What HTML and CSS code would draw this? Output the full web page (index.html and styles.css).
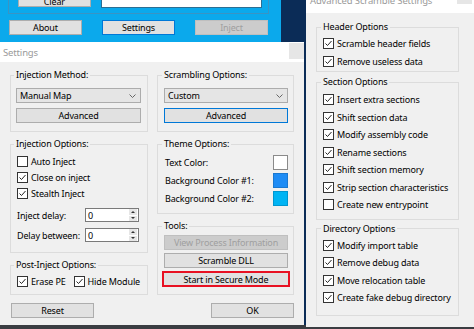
FILE: index.html
```html
<!DOCTYPE html>
<html>
<head>
<meta charset="utf-8">
<link rel="stylesheet" href="styles.css">
</head>
<body>
<div class="desk">
  <div class="backdrop"></div>

  <div class="win main-win">
    <div class="frame">
      <div class="btn clear-btn">Clear</div>
      <div class="textbox"></div>
    </div>
    <div class="main-row">
      <div class="btn">About</div>
      <div class="btn focus">Settings</div>
      <div class="btn disabled">Inject</div>
    </div>
  </div>

  <div class="win settings">
    <div class="titlebar"><span class="title">Settings</span><span class="closebox"></span></div>
    <div class="client">
      <div class="cols">
        <div class="col">
          <fieldset class="group g-method">
            <legend>Injection Method:</legend>
            <div class="combo"><span>Manual Map</span><svg class="chev" width="7" height="4" viewBox="0 0 7 4"><polyline points="0.5,0.5 3.5,3.5 6.5,0.5" fill="none" stroke="#666" stroke-width="1"/></svg></div>
            <div class="btn">Advanced</div>
          </fieldset>
          <fieldset class="group g-inject">
            <legend>Injection Options:</legend>
            <div class="chk"><span class="box"></span><span>Auto Inject</span></div>
            <div class="chk"><span class="box"><svg width="9" height="9" viewBox="0 0 9 9"><polyline points="1.5,4.5 3.5,6.5 7.5,2" fill="none" stroke="#222" stroke-width="1"/></svg></span><span>Close on inject</span></div>
            <div class="chk"><span class="box"><svg width="9" height="9" viewBox="0 0 9 9"><polyline points="1.5,4.5 3.5,6.5 7.5,2" fill="none" stroke="#222" stroke-width="1"/></svg></span><span>Stealth Inject</span></div>
            <div class="spinrow first"><span>Inject delay:</span><div class="spin"><span class="val">0</span><span class="arrows"><span class="up"></span><span class="down"></span></span></div></div>
            <div class="spinrow"><span>Delay between:</span><div class="spin"><span class="val">0</span><span class="arrows"><span class="up"></span><span class="down"></span></span></div></div>
          </fieldset>
          <fieldset class="group g-post">
            <legend>Post-Inject Options:</legend>
            <div class="chk-line">
              <div class="chk"><span class="box"><svg width="9" height="9" viewBox="0 0 9 9"><polyline points="1.5,4.5 3.5,6.5 7.5,2" fill="none" stroke="#222" stroke-width="1"/></svg></span><span>Erase PE</span></div>
              <div class="chk"><span class="box"><svg width="9" height="9" viewBox="0 0 9 9"><polyline points="1.5,4.5 3.5,6.5 7.5,2" fill="none" stroke="#222" stroke-width="1"/></svg></span><span>Hide Module</span></div>
            </div>
          </fieldset>
        </div>
        <div class="col">
          <fieldset class="group g-method">
            <legend>Scrambling Options:</legend>
            <div class="combo"><span>Custom</span><svg class="chev" width="7" height="4" viewBox="0 0 7 4"><polyline points="0.5,0.5 3.5,3.5 6.5,0.5" fill="none" stroke="#666" stroke-width="1"/></svg></div>
            <div class="btn focus">Advanced</div>
          </fieldset>
          <fieldset class="group g-theme">
            <legend>Theme Options:</legend>
            <div class="color-row"><span>Text Color:</span><span class="swatch sw-white"></span></div>
            <div class="color-row"><span>Background Color #1:</span><span class="swatch sw-blue"></span></div>
            <div class="color-row"><span>Background Color #2:</span><span class="swatch sw-cyan"></span></div>
          </fieldset>
          <fieldset class="group g-tools">
            <legend>Tools:</legend>
            <div class="btn disabled">View Process Information</div>
            <div class="btn">Scramble DLL</div>
            <div class="btn secure">Start in Secure Mode</div>
          </fieldset>
        </div>
      </div>
      <div class="bottom-row">
        <div class="btn wide">Reset</div>
        <div class="btn wide">OK</div>
      </div>
    </div>
  </div>

  <div class="win adv">
    <div class="titlebar adv-title"><span class="title">Advanced Scramble Settings</span><span class="closebox"></span></div>
    <div class="client adv-client">
      <fieldset class="group ag ag-header">
        <legend>Header Options</legend>
        <div class="chk"><span class="box"><svg width="9" height="9" viewBox="0 0 9 9"><polyline points="1.5,4.5 3.5,6.5 7.5,2" fill="none" stroke="#222" stroke-width="1"/></svg></span><span>Scramble header fields</span></div>
        <div class="chk"><span class="box"><svg width="9" height="9" viewBox="0 0 9 9"><polyline points="1.5,4.5 3.5,6.5 7.5,2" fill="none" stroke="#222" stroke-width="1"/></svg></span><span>Remove useless data</span></div>
      </fieldset>
      <fieldset class="group ag ag-section">
        <legend>Section Options</legend>
        <div class="chk"><span class="box"><svg width="9" height="9" viewBox="0 0 9 9"><polyline points="1.5,4.5 3.5,6.5 7.5,2" fill="none" stroke="#222" stroke-width="1"/></svg></span><span>Insert extra sections</span></div>
        <div class="chk"><span class="box"><svg width="9" height="9" viewBox="0 0 9 9"><polyline points="1.5,4.5 3.5,6.5 7.5,2" fill="none" stroke="#222" stroke-width="1"/></svg></span><span>Shift section data</span></div>
        <div class="chk"><span class="box"><svg width="9" height="9" viewBox="0 0 9 9"><polyline points="1.5,4.5 3.5,6.5 7.5,2" fill="none" stroke="#222" stroke-width="1"/></svg></span><span>Modify assembly code</span></div>
        <div class="chk"><span class="box"><svg width="9" height="9" viewBox="0 0 9 9"><polyline points="1.5,4.5 3.5,6.5 7.5,2" fill="none" stroke="#222" stroke-width="1"/></svg></span><span>Rename sections</span></div>
        <div class="chk"><span class="box"><svg width="9" height="9" viewBox="0 0 9 9"><polyline points="1.5,4.5 3.5,6.5 7.5,2" fill="none" stroke="#222" stroke-width="1"/></svg></span><span>Shift section memory</span></div>
        <div class="chk"><span class="box"><svg width="9" height="9" viewBox="0 0 9 9"><polyline points="1.5,4.5 3.5,6.5 7.5,2" fill="none" stroke="#222" stroke-width="1"/></svg></span><span>Strip section characteristics</span></div>
        <div class="chk"><span class="box"></span><span>Create new entrypoint</span></div>
      </fieldset>
      <fieldset class="group ag ag-dir">
        <legend>Directory Options</legend>
        <div class="chk"><span class="box"><svg width="9" height="9" viewBox="0 0 9 9"><polyline points="1.5,4.5 3.5,6.5 7.5,2" fill="none" stroke="#222" stroke-width="1"/></svg></span><span>Modify import table</span></div>
        <div class="chk"><span class="box"><svg width="9" height="9" viewBox="0 0 9 9"><polyline points="1.5,4.5 3.5,6.5 7.5,2" fill="none" stroke="#222" stroke-width="1"/></svg></span><span>Remove debug data</span></div>
        <div class="chk"><span class="box"><svg width="9" height="9" viewBox="0 0 9 9"><polyline points="1.5,4.5 3.5,6.5 7.5,2" fill="none" stroke="#222" stroke-width="1"/></svg></span><span>Move relocation table</span></div>
        <div class="chk"><span class="box"><svg width="9" height="9" viewBox="0 0 9 9"><polyline points="1.5,4.5 3.5,6.5 7.5,2" fill="none" stroke="#222" stroke-width="1"/></svg></span><span>Create fake debug directory</span></div>
      </fieldset>
    </div>
  </div>
</div>
</body>
</html>
```

FILE: styles.css
```css
* { box-sizing: border-box; }
html, body { margin: 0; padding: 0; }
body {
  font-family: "Noto Sans", "Liberation Sans", sans-serif;
  font-size: 9px;
  letter-spacing: -0.15px;
  color: #000;
  background: #3a3d42;
}
.desk {
  position: relative;
  width: 474px;
  height: 329px;
  overflow: hidden;
  background: #3a3d42;
}
.backdrop {
  position: absolute;
  left: 0;
  top: 0;
  width: 306px;
  height: 325px;
  background: #0b2c57;
}
.win { position: absolute; }

/* main blue window */
.main-win {
  left: 0;
  top: -24px;
  width: 281px;
  height: 66px;
  background: #0ba9ec;
}
.frame {
  margin: 0 0 0 8px;
  width: 261px;
  height: 38px;
  border: 1px solid #3994c4;
  border-top: none;
  display: flex;
  align-items: flex-end;
  gap: 10px;
  padding: 0 6px 6px 9px;
}
.clear-btn { width: 73px; height: 20px; padding-top: 3px; }
.textbox {
  width: 162px;
  height: 22px;
  margin-bottom: -1px;
  background: #fff;
  border: 1px solid #2b6f94;
}
.main-row {
  display: flex;
  gap: 20px;
  padding-left: 9px;
  margin-top: 6px;
}
.main-row .btn { width: 73px; }

/* buttons */
.btn {
  height: 15px;
  background: #e1e1e1;
  border: 1px solid #adadad;
  display: flex;
  align-items: center;
  justify-content: center;
  line-height: 1;
  white-space: nowrap;
}
.btn.focus { border-color: #0078d7; }
.btn.disabled {
  background: #cccccc;
  border-color: #bfbfbf;
  color: #9f9f9f;
}
.btn.secure {
  border: 2px solid #e81123;
  margin: 0 -2px;
  height: 16px;
}

/* windows */
.settings {
  left: 0;
  top: 42px;
  width: 304px;
  height: 283px;
  background: #f0f0f0;
}
.titlebar {
  height: 20px;
  background: #fff;
  display: flex;
  align-items: center;
  justify-content: space-between;
  padding-left: 3px;
}
.title { color: #9a9a9a; font-size: 9.5px; }
.closebox {
  width: 15px;
  height: 16px;
  background: #e6e6e6;
  align-self: flex-start;
  margin-top: 1px;
}
.client { background: #f0f0f0; }
.settings .client { padding-top: 7px; }
.cols {
  display: grid;
  grid-template-columns: 138px 137px;
  column-gap: 9px;
  padding-left: 10px;
}
.col {
  display: flex;
  flex-direction: column;
  gap: 6px;
}

.group {
  margin: 0;
  min-width: 0;
  border: 1px solid #dcdcdc;
  padding: 7px 6px 8px 5px;
}
.group legend {
  padding: 0 2px;
  margin-left: -2px;
  line-height: 12px;
  height: 12px;
}
.g-method { display: flex; flex-direction: column; gap: 5px; }
.col + .col .group { padding-left: 6px; padding-right: 5px; }

.combo {
  height: 15px;
  background: #e5e5e5;
  border: 1px solid #acacac;
  display: flex;
  align-items: center;
  justify-content: space-between;
  padding: 0 3px 0 3px;
}
.chev { margin-right: 1px; }

.g-inject { padding: 3px 6px 10px 5px; }
.chk {
  display: flex;
  align-items: center;
  gap: 3px;
  height: 16px;
  white-space: nowrap;
}
.box {
  width: 11px;
  height: 11px;
  flex: none;
  border: 1px solid #333;
  background: #fff;
  margin-left: 1px;
  display: flex;
  align-items: center;
  justify-content: center;
}
.box svg { display: block; }

.spinrow {
  display: grid;
  grid-template-columns: 68px 54px;
  align-items: center;
  padding-left: 1px;
  margin-top: 6px;
  white-space: nowrap;
}
.spinrow.first { margin-top: 7px; }
.spin {
  height: 14px;
  background: #fff;
  border: 1px solid #7a7a7a;
  display: flex;
  align-items: center;
  justify-content: space-between;
  padding-left: 2px;
}
.arrows {
  width: 8px;
  height: 12px;
  display: flex;
  flex-direction: column;
  gap: 1px;
  margin-right: 1px;
}
.arrows span {
  flex: 1;
  background: #e6e6e6;
  display: flex;
  align-items: center;
  justify-content: center;
}
.arrows .up::before {
  content: "";
  border-left: 2px solid transparent;
  border-right: 2px solid transparent;
  border-bottom: 2px solid #333;
}
.arrows .down::before {
  content: "";
  border-left: 2px solid transparent;
  border-right: 2px solid transparent;
  border-top: 2px solid #333;
}

.g-post { padding: 2px 6px 5px 5px; }
.chk-line { display: flex; gap: 7px; }

.g-theme { padding: 5px 5px 7px 6px; display: flex; flex-direction: column; gap: 3px; }
.color-row {
  display: flex;
  justify-content: space-between;
  align-items: center;
  height: 15px;
  padding-left: 1px;
}
.swatch { width: 15px; height: 15px; border: 1px solid #8a8a8a; }
.sw-white { background: #fff; }
.sw-blue { background: #1e8cf5; border-color: #1a78d0; }
.sw-cyan { background: #00b4f4; border-color: #0096d0; }

.g-tools { padding: 3px 5px 7px 6px; display: flex; flex-direction: column; gap: 3px; }

.bottom-row {
  display: flex;
  justify-content: space-between;
  padding: 0 10px 0 11px;
  margin-top: 8px;
}
.btn.wide { width: 83px; }

/* advanced window */
.adv {
  left: 306px;
  top: -13px;
  width: 172px;
  height: 340px;
  background: #f0f0f0;
}
.adv-title {
  height: 26px;
  padding-left: 4px;
  padding-right: 6px;
}
.adv-client { padding: 8px 0 0 10px; display: flex; flex-direction: column; gap: 3px; }
.ag { width: 143px; padding: 2px 6px 1px 6px; }
.ag .chk { height: 17.5px; gap: 3px; }
.ag .box { margin-left: 0; }
.ag-section { padding-top: 3px; padding-bottom: 5px; margin-top: 1px; }
.ag-dir { padding-top: 2px; padding-bottom: 8px; }
```
